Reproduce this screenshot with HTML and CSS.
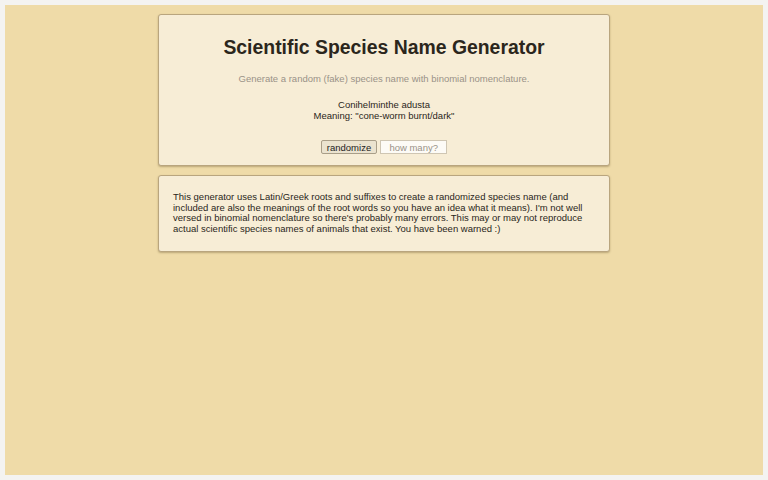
FILE: index.html
```html
<!DOCTYPE html>
<html lang="en">
<head>
  <meta charset="UTF-8">
  <meta name="viewport" content="width=device-width, initial-scale=1.0">
  <title>Scientific Species Name Generator</title>
  <link rel="stylesheet" href="styles.css">
</head>
<body>
  <div class="wrap">
    <div class="box">
      <h1>Scientific Species Name Generator</h1>
      <p class="sub">Generate a random (fake) species name with binomial nomenclature.</p>

      <div id="result" class="result">
        <div>Conihelminthe adusta</div>
        <div>Meaning: "cone-worm burnt/dark"</div>
      </div>

      <div class="controls">
        <button onclick="randomize()">randomize</button><input type="text" id="count" placeholder="how many?">
      </div>
    </div>

    <div class="box info">
      <p>This generator uses Latin/Greek roots and suffixes to create a randomized species name (and included are also the meanings of the root words so you have an idea what it means). I'm not well versed in binomial nomenclature so there's probably many errors. This may or may not reproduce actual scientific species names of animals that exist. You have been warned :)</p>
    </div>
  </div>

  <script>
    const genus = [
      ['Coni', 'cone'], ['Macro', 'large'], ['Micro', 'small'], ['Ptero', 'wing'],
      ['Cephalo', 'head'], ['Dendro', 'tree'], ['Litho', 'stone'], ['Hydro', 'water']
    ];
    const tails = [
      ['helminthe', 'worm'], ['saurus', 'lizard'], ['ichthys', 'fish'],
      ['ornis', 'bird'], ['don', 'tooth'], ['pus', 'foot']
    ];
    const species = [
      ['adusta', 'burnt/dark'], ['alba', 'white'], ['rubra', 'red'],
      ['minor', 'smaller'], ['gigantea', 'giant'], ['velox', 'swift']
    ];

    function pick(list) {
      return list[Math.floor(Math.random() * list.length)];
    }

    function randomize() {
      let n = parseInt(document.getElementById('count').value) || 1;
      let html = '';
      for (let i = 0; i < n; i++) {
        const g = pick(genus), t = pick(tails), s = pick(species);
        html += `<div>${g[0]}${t[0]} ${s[0]}</div><div>Meaning: "${g[1]}-${t[1]} ${s[1]}"</div>`;
      }
      document.getElementById('result').innerHTML = html;
    }
  </script>
</body>
</html>
```

FILE: styles.css
```css
html {
  background-color: #f4f3f1;
}
body {
  font-family: "Liberation Sans", Arial, sans-serif;
  font-size: 9.5px;
  color: #2a2620;
  margin: 5px;
  min-height: 470px;
  background-color: #efdba8;
}
.wrap {
  width: 452px;
  margin: 0 auto;
  padding-top: 9px;
}
.box {
  background-color: #f7edd6;
  border: 1px solid #b9a57e;
  border-radius: 3px;
  box-shadow: 0 1px 2px rgba(90, 70, 30, 0.35);
  text-align: center;
  padding: 21px 14px 11px;
  margin-bottom: 9px;
}
h1 {
  font-size: 19.4px;
  font-weight: bold;
  margin: 0;
  color: #2b261c;
}
.sub {
  color: #9a9288;
  margin: 14px 0 0;
}
.result {
  margin-top: 15px;
  line-height: 11px;
}
.controls {
  margin-top: 19px;
  display: flex;
  justify-content: center;
  gap: 3px;
}
button {
  font-family: inherit;
  font-size: 9.5px;
  color: #222;
  background-color: #ebe3cf;
  border: 1px solid #a99e88;
  border-radius: 2px;
  padding: 0 5px;
  height: 14px;
}
input {
  font-family: inherit;
  font-size: 9.5px;
  width: 67px;
  height: 14px;
  box-sizing: border-box;
  border: 1px solid #cfc6b3;
  background-color: #fdfbf6;
  text-align: center;
  padding: 0;
}
input::placeholder {
  color: #9a9288;
}
.info {
  text-align: left;
  padding: 16px 14px 17px;
}
.info p {
  margin: 0;
  line-height: 10.5px;
}
```
